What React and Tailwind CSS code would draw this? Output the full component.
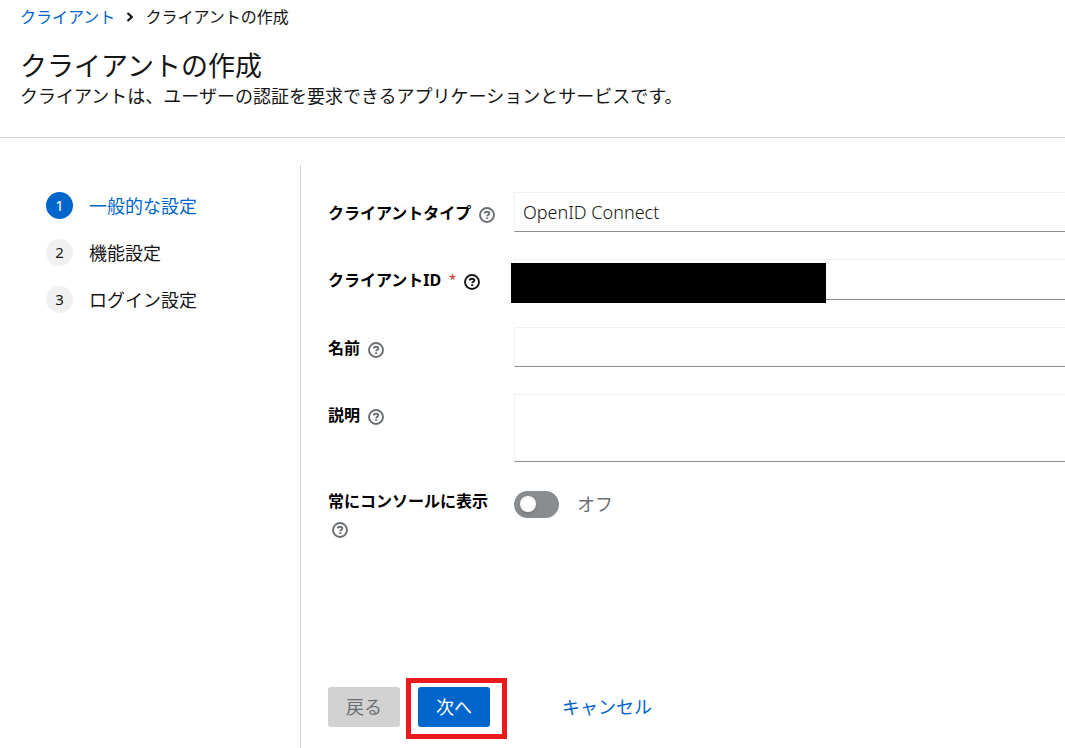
import React, { useState } from "react";

const steps = ["一般的な設定", "機能設定", "ログイン設定"];

function HelpButton({ label, dark }) {
  return (
    <button
      type="button"
      aria-label={`${label}のヘルプ`}
      className={dark ? "ml-1 mt-1 text-[#151515]" : "ml-1 mt-1 text-[#6a6e73]"}
    >
      <svg viewBox="0 0 16 16" className="block size-4" fill="none" stroke="currentColor" aria-hidden="true">
        <circle cx="8" cy="8" r="7" strokeWidth="1.9" />
        <path d="M5.7 6.5C5.8 5.2 6.8 4.7 8 4.7c1.3 0 2.3.7 2.3 1.7C10.3 7.700 8.200 7.700 8.200 9.200" strokeWidth="1.9" />
        <path d="M7.200 10.300h2v1.700h-2z" fill="currentColor" stroke="none" />
      </svg>
    </button>
  );
}

function Field({ id, label, required, dark, compact, children }) {
  return (
    <div className="flex items-start">
      <div
        className={
          compact
            ? "flex w-[186px] shrink-0 flex-wrap items-center gap-x-1 gap-y-[5px] pr-2"
            : "flex w-[186px] shrink-0 flex-wrap items-center gap-x-1 pt-[9px] pr-2"
        }
      >
        <label htmlFor={id} className="text-base leading-6 font-bold text-black">
          {label}
        </label>
        {required && (
          <span aria-hidden="true" className="ml-1 text-xs leading-6 text-[#c9190b]">
            *
          </span>
        )}
        <HelpButton label={label} dark={dark} />
      </div>
      <div className="relative flex min-w-0 flex-1">{children}</div>
    </div>
  );
}

const control =
  "w-full appearance-none rounded-none border-t border-l border-b border-t-[#f0f0f0] border-l-[#f0f0f0] border-b-[#8a8d90] bg-white px-2 text-lg font-light text-[#151515] outline-none";

export default function App() {
  const [always, setAlways] = useState(false);
  return (
    <div
      lang="ja"
      className="flex min-h-screen flex-col bg-white font-['Noto_Sans','Noto_Sans_CJK_JP',sans-serif] text-lg text-[#151515]"
    >
      <header className="border-b border-[#d2d2d2] px-5 pt-[5px] pb-[27px]">
        <nav aria-label="パンくずリスト" className="flex items-center text-base leading-6">
          <a href="#clients" className="text-[#0066cc]">
            クライアント
          </a>
          <svg viewBox="0 0 8 10" className="mx-[11px] h-[10px] w-2" fill="none" stroke="currentColor" strokeWidth="2.2" aria-hidden="true">
            <path d="M1.500 1 5.800 5 1.500 9" />
          </svg>
          <span>クライアントの作成</span>
        </nav>
        <h1 className="mt-[19px] text-[27px] leading-[35px]">クライアントの作成</h1>
        <p className="leading-[27px]">クライアントは、ユーザーの認証を要求できるアプリケーションとサービスです。</p>
      </header>

      <div className="flex flex-1 pt-[27px]">
        <nav aria-label="ステップ" className="w-[301px] shrink-0 border-r border-[#d2d2d2] pt-[27px] pl-[46px]">
          <ol className="flex flex-col gap-5">
            {steps.map((name, i) => (
              <li key={name}>
                <button
                  type="button"
                  aria-current={i === 0 ? "step" : undefined}
                  className={i === 0 ? "flex h-[27px] items-center gap-4 text-[#0066cc]" : "flex h-[27px] items-center gap-4"}
                >
                  <span
                    className={
                      i === 0
                        ? "flex size-[27px] items-center justify-center rounded-full bg-[#0066cc] text-[15px] text-white"
                        : "flex size-[27px] items-center justify-center rounded-full bg-[#f0f0f0] text-[15px]"
                    }
                  >
                    {i + 1}
                  </span>
                  <span className="pt-0.5 leading-[27px]">{name}</span>
                </button>
              </li>
            ))}
          </ol>
        </nav>

        <main className="flex min-w-0 flex-1 flex-col pt-[27px] pb-[21px] pl-[27px]">
          <form className="flex flex-1 flex-col justify-between" onSubmit={(e) => e.preventDefault()}>
            <div className="flex flex-col gap-[27px]">
              <Field id="type" label="クライアントタイプ">
                <select id="type" className={`${control} h-10`}>
                  <option>OpenID Connect</option>
                </select>
              </Field>
              <Field id="client-id" label="クライアントID" required dark>
                <input id="client-id" type="text" required className={`${control} h-[41px]`} />
                <div className="absolute top-1 -left-[3px] h-10 w-[315px] bg-black" />
              </Field>
              <Field id="name" label="名前">
                <input id="name" type="text" className={`${control} h-10`} />
              </Field>
              <Field id="description" label="説明">
                <textarea id="description" className={`${control} h-[68px] resize-none`} />
              </Field>
              <Field id="always" label="常にコンソールに表示" compact>
                <div className="flex items-center gap-[18px] pt-[2px]">
                  <input
                    id="always"
                    type="checkbox"
                    role="switch"
                    checked={always}
                    onChange={(e) => setAlways(e.target.checked)}
                    className="h-[27px] w-[45px] appearance-none rounded-full bg-[#8a8d90] before:mt-[5px] before:ml-[6px] before:block before:size-4 before:rounded-full before:bg-white before:shadow-md checked:bg-[#0066cc] checked:before:ml-[23px]"
                  />
                  <span className="leading-[27px] text-[#6a6e73]">{always ? "オン" : "オフ"}</span>
                </div>
              </Field>
            </div>

            <div className="flex">
              <button type="button" disabled className="h-10 rounded-[3px] bg-[#d2d2d2] px-[18px] text-[#6a6e73]">
                戻る
              </button>
              <div className="relative ml-[18px]">
                <button type="submit" className="h-10 rounded-[3px] bg-[#0066cc] px-[18px] text-white">
                  次へ
                </button>
                <div className="pointer-events-none absolute -top-[9px] -right-[17px] -bottom-3 -left-3 border-5 border-[#e81a1c]" />
              </div>
              <button type="button" className="ml-[54px] h-10 px-[18px] text-[#0066cc]">
                キャンセル
              </button>
            </div>
          </form>
        </main>
      </div>
    </div>
  );
}
